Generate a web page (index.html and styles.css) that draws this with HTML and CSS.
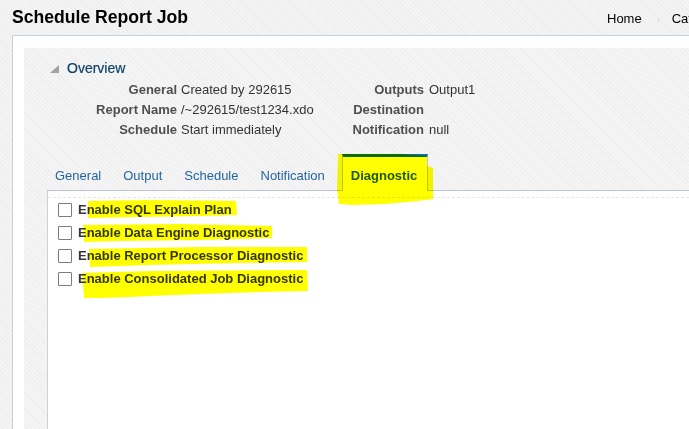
FILE: index.html
```html
<!DOCTYPE html>
<html>
<head>
<meta charset="utf-8">
<title>Schedule Report Job</title>
<link rel="stylesheet" href="styles.css">
</head>
<body>
<div class="page">
  <header class="top">
    <h1 class="title">Schedule Report Job</h1>
    <nav class="crumbs"><span>Home</span><span class="sep">›</span><span>Catalog</span></nav>
  </header>
  <div class="frame">
    <div class="panel">
      <section class="overview">
        <div class="ov-head">
          <svg class="tri" width="9" height="8" viewBox="0 0 9 8"><polygon points="9,0 9,8 0,8" fill="#a3a3a3"/></svg>
          <span class="ov-title">Overview</span>
        </div>
        <div class="ov-grid">
          <span class="lbl">General</span><span class="val">Created by 292615</span>
          <span class="lbl lbl2">Outputs</span><span class="val">Output1</span>
          <span class="lbl">Report Name</span><span class="val">/~292615/test1234.xdo</span>
          <span class="lbl lbl2">Destination</span><span class="val"></span>
          <span class="lbl">Schedule</span><span class="val">Start immediately</span>
          <span class="lbl lbl2">Notification</span><span class="val">null</span>
        </div>
      </section>
      <div class="tabs">
        <span class="tab">General</span>
        <span class="tab">Output</span>
        <span class="tab">Schedule</span>
        <span class="tab">Notification</span>
        <span class="tab tab-sel">Diagnostic</span>
      </div>
      <div class="tab-body">
        <div class="opts">
          <label class="opt"><span class="cb"></span><span>Enable SQL Explain Plan</span></label>
          <label class="opt"><span class="cb"></span><span>Enable Data Engine Diagnostic</span></label>
          <label class="opt"><span class="cb"></span><span>Enable Report Processor Diagnostic</span></label>
          <label class="opt"><span class="cb"></span><span>Enable Consolidated Job Diagnostic</span></label>
        </div>
      </div>
    </div>
  </div>
  <svg class="marker" width="689" height="429" viewBox="0 0 689 429">
    <path d="M338,154 L400,154 L427,156 L427,166 L433,168 L433,199 L418,201 L385,204 L352,205 L339,204 L337,190 Z"/>
    <path d="M88,201 L150,200 L236,201 L237,215 L200,216 L140,217 L88,218 Z"/>
    <path d="M83,225 L180,224 L272,226 L272,238 L200,240 L120,241 L84,242 Z"/>
    <path d="M89,249 L200,247 L307,247 L307,262 L240,263 L150,265 L90,267 Z"/>
    <path d="M82,273 L150,271 L307,270 L308,291 L260,292 L230,293 L200,294 L150,296 L130,297 L100,298 L84,298 Z"/>
  </svg>
</div>
</body>
</html>
```
FILE: styles.css
```css
html, body {
  margin: 0;
  padding: 0;
  height: 100%;
  overflow: hidden;
}
body {
  font-family: "Liberation Sans", Arial, sans-serif;
  font-size: 13px;
  color: #333;
  background: repeating-linear-gradient(45deg, #f4f4f4 0 2px, #ededed 2px 3px);
}
.page {
  position: relative;
  width: 689px;
  height: 429px;
  overflow: hidden;
}
.top {
  box-sizing: border-box;
  height: 35px;
  padding: 7px 0 0 12px;
  display: grid;
  grid-template-columns: 595px auto;
  align-items: baseline;
  white-space: nowrap;
}
.title {
  margin: 0;
  font-size: 17.6px;
  line-height: 20px;
  font-weight: bold;
  color: #000;
}
.crumbs {
  display: flex;
  align-items: baseline;
  line-height: 20px;
  color: #000;
}
.sep {
  color: #d4d4d4;
  font-size: 9px;
  margin: 0 12px 0 15px;
}
.frame {
  margin-left: 12px;
  height: 394px;
  box-sizing: border-box;
  border-top: 1px solid #c4d1df;
  border-left: 1px solid #c4d1df;
  background: #fff;
  padding: 12px 0 0 11px;
}
.panel {
  height: 100%;
  background: repeating-linear-gradient(45deg, #f5f5f5 0 2px, #eeeeee 2px 3px);
  padding: 12px 0 0 23px;
  box-sizing: border-box;
  display: flex;
  flex-direction: column;
}
.overview {
  padding-left: 3px;
}
.ov-head {
  display: flex;
  align-items: center;
  height: 17px;
}
.tri {
  margin: 1px 8px 0 0;
}
.ov-title {
  font-size: 14px;
  line-height: 17px;
  color: #0d4167;
  -webkit-text-stroke: 0.2px #0d4167;
}
.ov-grid {
  margin-top: 3px;
  display: grid;
  grid-template-columns: 131px 168px 80px auto;
  line-height: 20px;
  white-space: nowrap;
}
.lbl {
  text-align: right;
  font-weight: bold;
  color: #4f4f4f;
  padding-right: 4px;
}
.lbl2 {
  padding-right: 5px;
}
.val {
  color: #333;
}
.tabs {
  margin: 14px 0 0 -3px;
  display: flex;
  height: 36px;
  position: relative;
}
.tab {
  box-sizing: border-box;
  border-top: 3px solid transparent;
  padding: 4px 11px 0;
  line-height: 29px;
  color: #2364a3;
  white-space: nowrap;
}
.tab-sel {
  margin-left: 6px;
  padding: 4px 10px 0 8px;
  height: 37px;
  background: #fff;
  border-top: 3px solid #0a6bc4;
  border-left: 1px solid #bcc6d0;
  border-right: 1px solid #bcc6d0;
  font-weight: bold;
  color: #1e5a9c;
}
.tab-body {
  flex: 1;
  background: #fff;
  border-top: 1px solid #b9c5d1;
  border-left: 1px solid #c9d2dc;
  padding: 6px 0 0 10px;
}
.opts {
  border-top: 1px dashed #e6e6e6;
  margin-left: -10px;
  padding-left: 10px;
}
.opt {
  display: flex;
  align-items: center;
  height: 23px;
  font-weight: bold;
  color: #363636;
  white-space: nowrap;
}
.cb {
  box-sizing: border-box;
  width: 14px;
  height: 14px;
  border: 1px solid #7b7b7b;
  border-radius: 1px;
  background: #fff;
  margin-right: 6px;
}
.marker {
  position: absolute;
  left: 0;
  top: 0;
  z-index: 5;
  pointer-events: none;
  mix-blend-mode: multiply;
}
.marker path {
  fill: #ffff00;
}
```
